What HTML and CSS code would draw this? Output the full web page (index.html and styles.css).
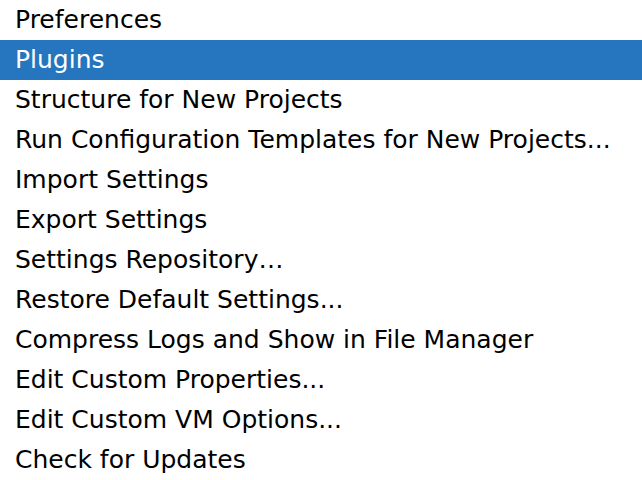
FILE: index.html
```html
<!DOCTYPE html>
<html>
<head>
<meta charset="utf-8">
<link rel="stylesheet" href="styles.css">
</head>
<body>
<ul class="menu">
  <li class="item">Preferences</li>
  <li class="item selected">Plugins</li>
  <li class="item">Structure for New Projects</li>
  <li class="item">Run Configuration Templates for New Projects...</li>
  <li class="item">Import Settings</li>
  <li class="item">Export Settings</li>
  <li class="item">Settings Repository…</li>
  <li class="item">Restore Default Settings...</li>
  <li class="item">Compress Logs and Show in File Manager</li>
  <li class="item">Edit Custom Properties...</li>
  <li class="item">Edit Custom VM Options...</li>
  <li class="item">Check for Updates</li>
</ul>
</body>
</html>
```
FILE: styles.css
```css
html, body {
  margin: 0;
  padding: 0;
  background: #ffffff;
}
.menu {
  list-style: none;
  margin: 0;
  padding: 0;
  font-family: "DejaVu Sans", sans-serif;
  font-size: 25px;
  color: #000000;
}
.item {
  height: 40px;
  line-height: 40px;
  padding-left: 15px;
  white-space: nowrap;
}
.selected {
  background: #2675bf;
  color: #ffffff;
}
```
